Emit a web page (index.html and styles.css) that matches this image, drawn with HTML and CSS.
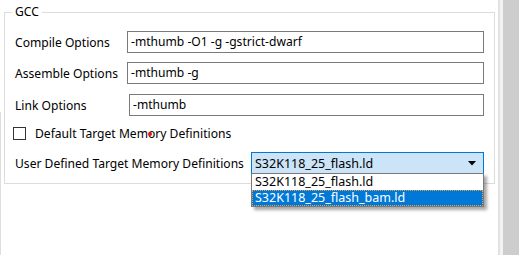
FILE: index.html
```html
<!DOCTYPE html>
<html>
<head>
<meta charset="utf-8">
<link rel="stylesheet" href="styles.css">
</head>
<body>
<div class="page">
  <div class="content">
    <fieldset class="group">
      <legend class="legend">GCC</legend>
      <div class="row row-compile">
        <span class="label">Compile Options</span>
        <div class="field">-mthumb -O1 -g -gstrict-dwarf</div>
      </div>
      <div class="row row-assemble">
        <span class="label">Assemble Options</span>
        <div class="field">-mthumb -g</div>
      </div>
      <div class="row row-link">
        <span class="label">Link Options</span>
        <div class="field field-link">-mthumb</div>
      </div>
      <div class="row row-check">
        <span class="checkbox"></span>
        <span class="check-label">Default Target Mem<span class="dot-anchor">o<span class="red-dot"></span></span>ry Definitions</span>
      </div>
      <div class="row row-combo">
        <span class="label">User Defined Target Memory Definitions</span>
        <div class="combo">
          <span class="combo-text">S32K118_25_flash.ld</span>
          <svg class="arrow" width="8" height="5" viewBox="0 0 8 5"><path d="M0 0H8L4 4.5Z" fill="#000"/></svg>
          <ul class="list">
            <li class="item">S32K118_25_flash.ld</li>
            <li class="item item-selected">S32K118_25_flash_bam.ld</li>
          </ul>
        </div>
      </div>
    </fieldset>
  </div>
  <div class="scrollbar"><div class="track"></div></div>
</div>
</body>
</html>
```

FILE: styles.css
```css
html, body {
  margin: 0;
  padding: 0;
  background: #fff;
}
body {
  font-family: "Segoe UI", "Noto Sans", "Open Sans", sans-serif;
  font-size: 12.1px;
  color: #000;
}
.page {
  display: flex;
  width: 519px;
  height: 255px;
  overflow: hidden;
  position: relative;
}
.page::before {
  content: "";
  position: absolute;
  left: 0;
  top: 112px;
  bottom: 0;
  width: 1px;
  background: #dedede;
}
.content {
  width: 498px;
  padding: 4px 3px 0 4px;
  box-sizing: border-box;
}
.group {
  margin: 0;
  border: 1px solid #dcdcdc;
  padding: 0 10px 9px 10px;
  min-width: 0;
}
.legend {
  padding: 0 3px;
  margin-left: -3px;
  line-height: 16px;
}
.row {
  display: flex;
  align-items: center;
  height: 22px;
}
.row-compile { margin-top: 11px; }
.row-assemble { margin-top: 9px; }
.row-link { margin-top: 10px; }
.row-check { margin-top: 6px; margin-left: -2px; }
.row-combo { margin-top: 8px; }
.label {
  width: 112px;
  flex: none;
  white-space: nowrap;
}
.row-combo .label { width: 236px; }
.field {
  flex: 1;
  height: 22px;
  box-sizing: border-box;
  border: 1px solid #7a7a7a;
  padding: 0 3px;
  line-height: 20px;
  white-space: nowrap;
}
.field-link { margin-left: 2px; }
.checkbox {
  width: 13px;
  height: 13px;
  box-sizing: border-box;
  border: 1px solid #333;
  background: #fff;
  flex: none;
}
.check-label {
  margin-left: 9px;
  white-space: nowrap;
}
.dot-anchor { position: relative; }
.red-dot {
  position: absolute;
  left: 0;
  top: 7px;
  width: 4px;
  height: 4px;
  border-radius: 50%;
  background: #e01818;
}
.combo {
  flex: 1;
  position: relative;
  height: 22px;
  box-sizing: border-box;
  border: 1px solid #0078d7;
  background: #cce4f7;
  display: flex;
  align-items: center;
  padding: 0 5px 0 3px;
}
.combo-text { flex: 1; white-space: nowrap; font-size: 12.5px; }
.arrow { flex: none; margin-right: 2px; }
.list {
  position: absolute;
  left: -1px;
  right: -1px;
  top: 20px;
  margin: 0;
  padding: 0;
  list-style: none;
  background: #fff;
  border: 1px solid #7a7a7a;
  box-shadow: 3px 3px 3px rgba(0,0,0,0.35);
  font-size: 12.5px;
}
.item {
  height: 16px;
  line-height: 16px;
  padding: 0 3px;
  white-space: nowrap;
}
.item-selected {
  background: #0078d7;
  color: #fff;
  outline: 1px dotted #f0a040;
  outline-offset: -1px;
}
.scrollbar {
  width: 21px;
  flex: none;
  box-sizing: border-box;
  border-left: 2px solid #e2e2e2;
  padding-left: 3px;
  background: #f3f3f3;
}
.track {
  height: 100%;
  background: #cdcdcd;
}
```
